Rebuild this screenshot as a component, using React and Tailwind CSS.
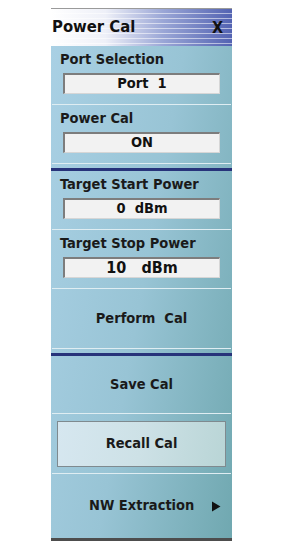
import React from "react";

function Field({ label, value, big }) {
    return (
        <div className="h-[58px] flex flex-col pl-[9px] pt-[5px]">
            <p className="text-[14.5px] leading-[17px] font-bold text-[#1a1a1a]">{label}</p>
            <div className="mt-[5px] ml-[3px] w-[157px] h-[21px] bg-[#f2f2f2] border-t-[2px] border-l-[2px] border-t-[#7d7d7d] border-l-[#7d7d7d] border-b border-r border-b-[#d6d6d6] border-r-[#d6d6d6] flex items-center justify-center">
                <span className={big ? "text-[16px] font-bold text-[#111] whitespace-pre" : "text-[14.5px] font-bold text-[#111] whitespace-pre"}>{value}</span>
            </div>
        </div>
    );
}

const Light = () => <div className="h-px bg-[#dfedf2] mx-[1px]" />;
const Navy = () => <div className="h-[3px] bg-[#27337a] mt-[4px]" />;

export default function App() {
    return (
        <div className="w-[282px] h-[549px] bg-white pt-[8px] pl-[51px] font-['DejaVu_Sans_Condensed','DejaVu_Sans',sans-serif]">
            <div className="w-[181px] flex flex-col">
                {/* barra de titulo */}
                <div className="h-[38px] border-t border-[#9a9a9a] bg-[linear-gradient(to_right,#ffffff_0%,#eef0f8_30%,#9aa6d6_62%,#5363b2_100%)] relative">
                    <div className="absolute inset-0 bg-[repeating-linear-gradient(to_bottom,transparent_0px,transparent_4px,rgba(255,255,255,0.55)_4px,rgba(255,255,255,0.55)_5px)]" />
                    <div className="relative flex items-center justify-between h-full pl-[1px] pr-[9px]">
                        <span className="text-[16.5px] font-bold text-[#111]">Power Cal</span>
                        <span className="text-[16px] font-bold text-[#111]">X</span>
                    </div>
                </div>

                <div className="bg-[linear-gradient(100deg,#a9d0e4_0%,#98c4d5_50%,#70a8b0_100%)] border-b-[3px] border-[#4d4d4d]">
                    <Field label="Port Selection" value="Port  1" />
                    <Light />
                    <Field label="Power Cal" value="ON" />
                    <Light />
                    <Navy />
                    <Field label="Target Start Power" value="0  dBm" />
                    <Light />
                    <Field label="Target Stop Power" value="10   dBm" big />
                    <Light />
                    <div className="h-[59px] flex items-center justify-center">
                        <span className="text-[14.5px] font-bold text-[#1a1a1a] whitespace-pre">Perform  Cal</span>
                    </div>
                    <Light />
                    <Navy />
                    <div className="h-[57px] flex items-center justify-center">
                        <span className="text-[14.5px] font-bold text-[#1a1a1a]">Save Cal</span>
                    </div>
                    <Light />
                    <div className="h-[59px] flex items-center px-[6px]">
                        <div className="w-full h-[46px] border border-[#7f8a8f] bg-[linear-gradient(100deg,#d6e7f0_0%,#cde1e6_50%,#b9d5d6_100%)] flex items-center justify-center">
                            <span className="text-[14.5px] font-bold text-[#1a1a1a]">Recall Cal</span>
                        </div>
                    </div>
                    <Light />
                    <div className="h-[64px] flex items-center pl-[38px] pr-[11px]">
                        <span className="text-[14.5px] font-bold text-[#1a1a1a]">NW Extraction</span>
                        <svg className="ml-auto" width="10" height="11" viewBox="0 0 10 11">
                            <path d="M1 0.5 L9.5 5.5 L1 10.5 Z" fill="#111" />
                        </svg>
                    </div>
                </div>
            </div>
        </div>
    );
}
